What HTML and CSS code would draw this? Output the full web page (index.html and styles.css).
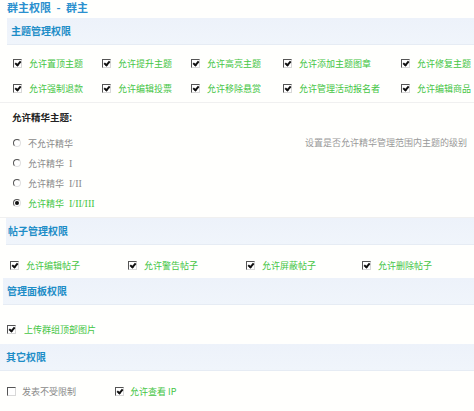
FILE: index.html
```html
<!DOCTYPE html>
<html lang="zh-CN">
<head>
<meta charset="utf-8">
<title>群主权限 - 群主</title>
<link rel="stylesheet" href="styles.css">
</head>
<body>
<div class="page">
  <div class="title">群主权限 - 群主</div>

  <div class="hdr hdr-1">主题管理权限</div>
  <div class="opts opts-topic">
    <label class="opt"><span class="cb on"></span><span class="txt on">允许置顶主题</span></label>
    <label class="opt"><span class="cb on"></span><span class="txt on">允许提升主题</span></label>
    <label class="opt"><span class="cb on"></span><span class="txt on">允许高亮主题</span></label>
    <label class="opt"><span class="cb on"></span><span class="txt on">允许添加主题图章</span></label>
    <label class="opt"><span class="cb on"></span><span class="txt on">允许修复主题</span></label>
    <label class="opt"><span class="cb on"></span><span class="txt on">允许强制退款</span></label>
    <label class="opt"><span class="cb on"></span><span class="txt on">允许编辑投票</span></label>
    <label class="opt"><span class="cb on"></span><span class="txt on">允许移除悬赏</span></label>
    <label class="opt"><span class="cb on"></span><span class="txt on">允许管理活动报名者</span></label>
    <label class="opt"><span class="cb on"></span><span class="txt on">允许编辑商品</span></label>
  </div>

  <div class="essence">
    <div class="ess-label">允许精华主题:</div>
    <div class="ess-body">
      <div class="radios">
        <label class="opt rrow"><span class="rd"></span><span class="txt">不允许精华</span></label>
        <label class="opt rrow"><span class="rd"></span><span class="txt">允许精华 <span class="roman">I</span></span></label>
        <label class="opt rrow"><span class="rd"></span><span class="txt">允许精华 <span class="roman">I/II</span></span></label>
        <label class="opt rrow"><span class="rd on"></span><span class="txt on">允许精华 <span class="roman">I/II/III</span></span></label>
      </div>
      <div class="note">设置是否允许精华管理范围内主题的级别</div>
    </div>
  </div>

  <div class="hdr hdr-2">帖子管理权限</div>
  <div class="opts opts-post">
    <label class="opt"><span class="cb on"></span><span class="txt on">允许编辑帖子</span></label>
    <label class="opt"><span class="cb on"></span><span class="txt on">允许警告帖子</span></label>
    <label class="opt"><span class="cb on"></span><span class="txt on">允许屏蔽帖子</span></label>
    <label class="opt"><span class="cb on"></span><span class="txt on">允许删除帖子</span></label>
  </div>

  <div class="hdr hdr-3">管理面板权限</div>
  <div class="opts opts-panel">
    <label class="opt"><span class="cb on"></span><span class="txt on">上传群组顶部图片</span></label>
  </div>

  <div class="hdr hdr-4">其它权限</div>
  <div class="opts opts-other">
    <label class="opt"><span class="cb"></span><span class="txt">发表不受限制</span></label>
    <label class="opt"><span class="cb on"></span><span class="txt on">允许查看 IP</span></label>
  </div>
</div>
</body>
</html>
```

FILE: styles.css
```css
html, body {
  margin: 0;
  padding: 0;
  background: #fffffd;
}
body {
  font-family: "Noto Sans CJK SC", "Noto Sans", sans-serif;
  font-size: 9px;
  color: #888;
  width: 474px;
  height: 411px;
  overflow: hidden;
}
.page {
  display: flex;
  flex-direction: column;
}
.title {
  height: 14px;
  line-height: 14px;
  margin: 0 0 4px 7px;
  font-size: 11px;
  font-weight: bold;
  color: #2b90cf;
  word-spacing: 3px;
}
.hdr {
  height: 26px;
  line-height: 26px;
  border-bottom: 1px solid #e6ecf4;
  background: linear-gradient(#edf2fa, #f0f5fb);
  font-size: 10px;
  font-weight: bold;
  color: #1d8dc7;
}
.hdr-1 { margin-left: 7px; padding-left: 4px; }
.hdr-2 { margin-left: 6px; padding-left: 2px; }
.hdr-3 { margin-left: 3px; padding-left: 4px; }
.hdr-4 { margin-left: 0; padding-left: 6px; }

.opts {
  display: grid;
  align-items: center;
}
.opt {
  display: flex;
  align-items: center;
  height: 20px;
  white-space: nowrap;
}
.txt { color: #8a8a8a; }
.txt.on { color: #44c544; }

.cb {
  position: relative;
  flex: none;
  width: 9px;
  height: 9px;
  box-sizing: border-box;
  border: 1px solid;
  border-color: #555 #d8d8d8 #d8d8d8 #555;
  background: #fff;
  margin-right: 7px;
}
.cb.on::after {
  content: "";
  position: absolute;
  left: 2px;
  top: 0;
  width: 2px;
  height: 4px;
  border: solid #111;
  border-width: 0 2px 2px 0;
  transform: rotate(40deg);
}

.opts-topic {
  padding: 6px 0 1px 13px;
  grid-template-columns: 89px 89px 92px 118px 1fr;
  grid-auto-rows: 25px;
  border-bottom: 1px solid #f0f0f0;
}
.opts-post {
  padding: 10px 0 3px 10px;
  grid-template-columns: 118px 118px 116px 1fr;
}
.opts-post .cb { margin-right: 7px; }
.opts-panel {
  padding: 14px 0 5px 7px;
  grid-template-columns: 1fr;
}
.opts-panel .cb { margin-right: 8px; }
.opts-other {
  padding: 10px 0 10px 7px;
  grid-template-columns: 108px 1fr;
}
.opts-other .cb { margin-right: 6px; }

.essence {
  padding: 4px 0 4px 12px;
  border-bottom: 1px solid #f0f0f0;
}
.ess-label {
  height: 20px;
  line-height: 20px;
  font-size: 9.5px;
  font-weight: bold;
  color: #222;
}
.ess-body {
  display: flex;
  margin-top: 6px;
}
.radios {
  display: flex;
  flex-direction: column;
  width: 293px;
}
.rrow { padding-left: 1px; }
.rd {
  position: relative;
  flex: none;
  width: 8px;
  height: 8px;
  box-sizing: border-box;
  border-radius: 50%;
  border: 1px solid;
  border-color: #555 #e0e0e0 #e0e0e0 #555;
  background: #fff;
  margin-right: 7px;
}
.rd.on::after {
  content: "";
  position: absolute;
  left: 1px;
  top: 1px;
  width: 4px;
  height: 4px;
  border-radius: 50%;
  background: #111;
}
.roman {
  font-family: "Liberation Serif", "DejaVu Serif", serif;
  font-size: 10px;
  margin-left: 3px;
}
.note {
  height: 20px;
  line-height: 20px;
  color: #999;
  white-space: nowrap;
}
```
